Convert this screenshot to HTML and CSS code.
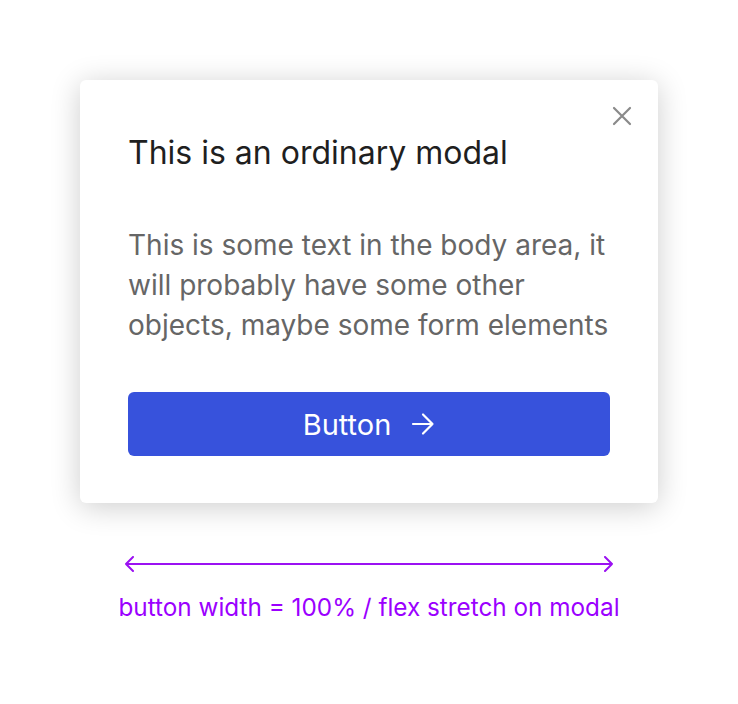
FILE: index.html
```html
<!DOCTYPE html>
<html>
<head>
<meta charset="utf-8">
<link rel="stylesheet" href="styles.css">
</head>
<body>
<div class="page">
  <div class="modal">
    <button class="close" aria-label="Close">
      <svg width="20" height="20" viewBox="0 0 20 20"><path d="M2 2L18 18M18 2L2 18" stroke="#8a8a8a" stroke-width="2.2" stroke-linecap="round"/></svg>
    </button>
    <h1 class="title">This is an ordinary modal</h1>
    <p class="body">This is some text in the body area, it will probably have some other objects, maybe some form elements</p>
    <button class="primary">
      <span>Button</span>
      <svg width="24" height="24" viewBox="0 0 24 24"><path d="M2 12H21.5M12 2.5L21.5 12L12 21.5" fill="none" stroke="#fff" stroke-width="2.2" stroke-linecap="round" stroke-linejoin="round"/></svg>
    </button>
  </div>
  <div class="annotation">
    <svg class="measure" width="490" height="16" viewBox="0 0 490 16"><path d="M2 8H488M9 1L2 8L9 15M481 1L488 8L481 15" fill="none" stroke="#9b11f2" stroke-width="2" stroke-linecap="round" stroke-linejoin="round"/></svg>
    <div class="note">button width = 100% / flex stretch on modal</div>
  </div>
</div>
</body>
</html>
```
FILE: styles.css
```css
html, body {
  margin: 0;
  padding: 0;
  background: #fff;
}
body {
  font-family: Inter, "Noto Sans", sans-serif;
}
.page {
  width: 738px;
  height: 704px;
  display: flex;
  flex-direction: column;
  align-items: center;
  padding-top: 80px;
  box-sizing: border-box;
}
.modal {
  position: relative;
  width: 578px;
  box-sizing: border-box;
  padding: 48px 48px 47px;
  background: #fff;
  border-radius: 6px;
  box-shadow: 0 4px 30px rgba(0, 0, 0, 0.2);
  display: flex;
  flex-direction: column;
  align-items: stretch;
}
.close {
  position: absolute;
  right: 26px;
  top: 26px;
  width: 20px;
  height: 20px;
  padding: 0;
  border: 0;
  background: none;
  display: flex;
}
.title {
  margin: 5px 0 0;
  font-size: 32px;
  font-weight: 400;
  line-height: 40px;
  color: #1f1f1f;
}
.body {
  margin: 52px 0 0;
  font-size: 28px;
  line-height: 40px;
  color: #666;
}
.primary {
  margin-top: 47px;
  height: 64px;
  border: 0;
  border-radius: 6px;
  background: #3752dc;
  color: #fff;
  font-family: Inter, "Noto Sans", sans-serif;
  font-size: 29px;
  display: flex;
  align-items: center;
  justify-content: center;
  gap: 20px;
  padding: 0;
}
.annotation {
  margin-top: 53px;
  display: flex;
  flex-direction: column;
  align-items: center;
}
.measure {
  display: block;
}
.note {
  margin-top: 20px;
  font-size: 24.3px;
  color: #9b00ff;
  line-height: 30px;
}
```
